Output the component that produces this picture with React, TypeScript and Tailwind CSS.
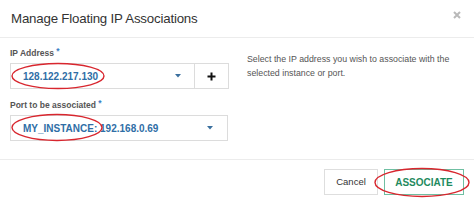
export default function App() {
  return (
    <div className="relative w-[474px] h-[205px] overflow-hidden bg-white font-['Liberation_Sans',Arial,sans-serif] text-[#333]">
      {/* Header */}
      <div className="flex h-[38px] items-center justify-between border-b border-[#ececec] pl-[11px] pr-[13px]">
        <h2 className="text-[13.3px] leading-[16px] tracking-[-0.2px] text-[#333]">Manage Floating IP Associations</h2>
        <svg width="8" height="8" viewBox="0 0 8 8" className="mb-[8px]">
          <path d="M1 1L7 7M7 1L1 7" stroke="#b9b9b9" strokeWidth="2" />
        </svg>
      </div>

      {/* Body */}
      <div className="flex border-b border-[#ececec] pl-[10px] pr-[10px] pt-[9px] pb-[18px]">
        <div className="w-[219px]">
          <label className="block text-[8.5px] leading-[12px] font-bold text-[#555]">
            IP Address <span className="relative -top-[2px] text-[#3b7fc4]">*</span>
          </label>
          <div className="mt-[4px] flex h-[26px]">
            <div className="flex flex-1 items-center justify-between border border-[#dcdcdc] pl-[12px] pr-[13px]">
              <span className="text-[10px] font-bold text-[#2f6ea6]">128.122.217.130</span>
              <svg width="6" height="4" viewBox="0 0 6 4">
                <path d="M0 0H6L3 3.5Z" fill="#3a6f9e" />
              </svg>
            </div>
            <button className="flex w-[34px] items-center justify-center border border-l-0 border-[#dcdcdc]">
              <svg width="9" height="9" viewBox="0 0 9 9">
                <path d="M4.5 0.5V8.5M0.5 4.5H8.5" stroke="#111" strokeWidth="2" />
              </svg>
            </button>
          </div>

          <label className="mt-[10px] block text-[8.5px] leading-[12px] font-bold text-[#555]">
            Port to be associated <span className="relative -top-[2px] text-[#3b7fc4]">*</span>
          </label>
          <div className="mt-[4px] flex h-[26px] w-[218px] items-center justify-between border border-[#dcdcdc] pl-[12px] pr-[14px]">
            <span className="text-[10px] font-bold text-[#2f6ea6]">MY_INSTANCE: 192.168.0.69</span>
            <svg width="6" height="4" viewBox="0 0 6 4">
              <path d="M0 0H6L3 3.5Z" fill="#3a6f9e" />
            </svg>
          </div>
        </div>

        <div className="ml-[18px] w-[215px] pt-[5px] text-[8.8px] leading-[14px] text-[#555]">
          Select the IP address you wish to associate with the selected instance or port.
        </div>
      </div>

      {/* Footer */}
      <div className="flex justify-end gap-[6px] pr-[10px] pt-[9px]">
        <button className="h-[26px] w-[54px] border border-[#dedede] bg-white text-[9.5px] text-[#333]">Cancel</button>
        <button className="h-[26px] w-[80px] border border-[#6fbfa2] bg-white text-[10px] font-bold text-[#1f8a5e]">
          ASSOCIATE
        </button>
      </div>

      {/* Red annotation ellipses */}
      <svg className="pointer-events-none absolute left-0 top-0" width="474" height="205" viewBox="0 0 474 205">
        <ellipse cx="58" cy="76" rx="46" ry="12.5" fill="none" stroke="#d8262e" strokeWidth="1.4" />
        <ellipse cx="57" cy="127.5" rx="45" ry="13" fill="none" stroke="#d8262e" strokeWidth="1.4" />
        <ellipse cx="422" cy="182.5" rx="47" ry="14" fill="none" stroke="#d8262e" strokeWidth="1.4" />
      </svg>
    </div>
  );
}
